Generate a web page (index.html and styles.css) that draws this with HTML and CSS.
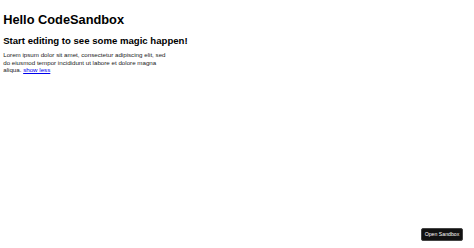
FILE: index.html
```html
<!DOCTYPE html>
<html lang="en">
<head>
    <meta charset="UTF-8">
    <title>Hello CodeSandbox</title>
    <link rel="stylesheet" href="styles.css">
</head>
<body>
    <div class="app">
        <h1>Hello CodeSandbox</h1>
        <h2>Start editing to see some magic happen!</h2>
        <p class="text">
            Lorem ipsum dolor sit amet, consectetur adipiscing elit, sed do eiusmod tempor incididunt ut labore et dolore magna aliqua. <a href="#">show less</a>
        </p>
    </div>
    <a class="open-btn" href="#">Open Sandbox</a>
</body>
</html>
```

FILE: styles.css
```css
body{
    margin: 3.2px;
    font-family: "Liberation Sans", Arial, sans-serif;
    color: #000;
    background: #fff;
}
h1{
    font-size: 12.8px;
    margin: 8.6px 0;
}
h2{
    font-size: 9.6px;
    margin: 8px 0 5px;
}
.text{
    width: 166px;
    font-size: 6.2px;
    line-height: 7.2px;
    margin: 5px 0;
    color: #222;
}
.text a{
    color: #0000ee;
}
.open-btn{
    position: fixed;
    right: 11px;
    bottom: 7px;
    width: 42px;
    height: 13px;
    box-sizing: border-box;
    border: 1px solid #444;
    border-radius: 2px;
    background-color: #111;
    color: #fff;
    font-size: 5.2px;
    line-height: 11px;
    text-align: center;
    text-decoration: none;
}
```
